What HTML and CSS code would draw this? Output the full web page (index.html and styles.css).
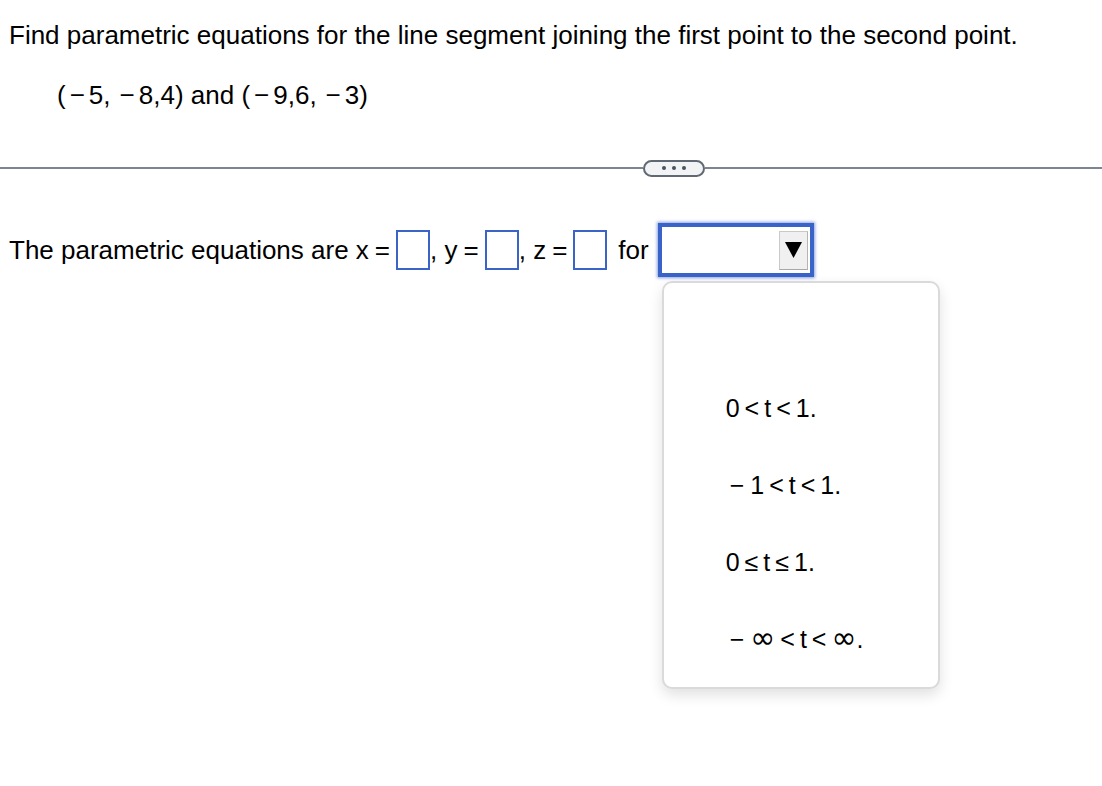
FILE: index.html
```html
<!DOCTYPE html>
<html>
<head>
<meta charset="utf-8">
<link rel="stylesheet" href="styles.css">
</head>
<body>
<div class="page">
  <p class="title">Find parametric equations for the line segment joining the first point to the second point.</p>
  <p class="points"><span class="m">(<span class="op">−</span>5,<span class="op sp">−</span>8,4)</span> and <span class="m">(<span class="op">−</span>9,6,<span class="op sp">−</span>3)</span></p>
  <div class="divider">
    <div class="rule left"></div>
    <div class="more"><span></span><span></span><span></span></div>
    <div class="rule"></div>
  </div>
  <div class="answer">
    <span class="lbl">The parametric equations are x<span class="eq">=</span></span>
    <span class="box"></span>
    <span class="lbl">, y<span class="eq">=</span></span>
    <span class="box"></span>
    <span class="lbl">, z<span class="eq">=</span></span>
    <span class="box"></span>
    <span class="lbl for">for</span>
    <div class="select">
      <div class="sel-main">
        <span class="sel-btn"><svg width="17" height="16" viewBox="0 0 17 16"><polygon points="0,0 17,0 8.5,16" fill="#000"/></svg></span>
      </div>
      <div class="menu">
        <div class="opt o1">0<span class="r">&lt;</span>t<span class="r">&lt;</span>1.</div>
        <div class="opt o2"><span class="neg">−</span>1<span class="r">&lt;</span>t<span class="r">&lt;</span>1.</div>
        <div class="opt o3">0<span class="r">≤</span>t<span class="r">≤</span>1.</div>
        <div class="opt o4"><span class="neg">−</span><span class="inf">∞</span><span class="r">&lt;</span>t<span class="r">&lt;</span><span class="inf">∞</span>.</div>
      </div>
    </div>
  </div>
</div>
</body>
</html>
```

FILE: styles.css
```css
html, body {
  margin: 0;
  padding: 0;
  background: #fff;
}
body {
  font-family: "Liberation Sans", Arial, sans-serif;
  color: #000;
  width: 1102px;
  height: 786px;
  overflow: hidden;
}
.page {
  padding-top: 20px;
}
.title {
  margin: 0;
  padding-left: 9px;
  font-size: 26px;
  line-height: 30px;
  white-space: nowrap;
}
.points {
  margin: 0;
  margin-top: 30px;
  padding-left: 57px;
  font-size: 26px;
  line-height: 30px;
}
.op {
  margin: 0 4px 0 4px;
}
.op.sp {
  margin-left: 9px;
}
.divider {
  display: flex;
  align-items: center;
  margin-top: 49px;
  height: 18px;
}
.rule {
  flex: 1;
  height: 2px;
  background: #7c8590;
}
.rule.left {
  flex: none;
  width: 643px;
}
.more {
  box-sizing: border-box;
  width: 62px;
  height: 17px;
  border: 2px solid #5f6873;
  border-radius: 9px;
  background: #f2f3f5;
  display: flex;
  justify-content: center;
  align-items: center;
  gap: 6px;
}
.more span {
  width: 4px;
  height: 4px;
  border-radius: 50%;
  background: #4b535d;
}
.answer {
  display: flex;
  align-items: center;
  margin-top: 46px;
  padding-left: 9px;
  font-size: 26px;
  height: 54px;
}
.lbl {
  white-space: pre;
}
.eq {
  margin-left: 6px;
  margin-right: 6px;
}
.box {
  box-sizing: border-box;
  width: 34px;
  height: 40px;
  border: 2px solid #3a64c6;
}
.for {
  margin-left: 11px;
  margin-right: 9px;
}
.select {
  position: relative;
  width: 156px;
  height: 54px;
}
.sel-main {
  box-sizing: border-box;
  width: 156px;
  height: 54px;
  border: 4px solid #3a63c9;
  box-shadow: 0 0 3px 1px rgba(58, 99, 201, 0.6);
  background: #fff;
  display: flex;
  justify-content: flex-end;
  align-items: center;
  padding-right: 2px;
}
.sel-btn {
  box-sizing: border-box;
  width: 29px;
  height: 39px;
  background: #f0f0f0;
  border: 1px solid #c9c9c9;
  border-bottom-color: #a8a8a8;
  border-right-color: #b5b5b5;
  display: flex;
  align-items: center;
  justify-content: center;
}
.sel-btn svg {
  display: block;
}
.menu {
  position: absolute;
  left: 4px;
  top: 58px;
  box-sizing: border-box;
  width: 278px;
  height: 408px;
  background: #fff;
  border: 2px solid #dadada;
  border-radius: 10px;
  box-shadow: 0 6px 14px rgba(0, 0, 0, 0.12);
  padding-top: 113px;
  display: flex;
  flex-direction: column;
  gap: 53px;
}
.opt {
  font-size: 25px;
  line-height: 24px;
  white-space: pre;
}
.o1, .o3 { padding-left: 62px; }
.o2, .o4 { padding-left: 66px; }
.r {
  margin: 0 5px;
}
.neg {
  margin-right: 6px;
}
.inf {
  font-family: "DejaVu Sans", sans-serif;
  font-size: 30px;
  line-height: 20px;
}
```
